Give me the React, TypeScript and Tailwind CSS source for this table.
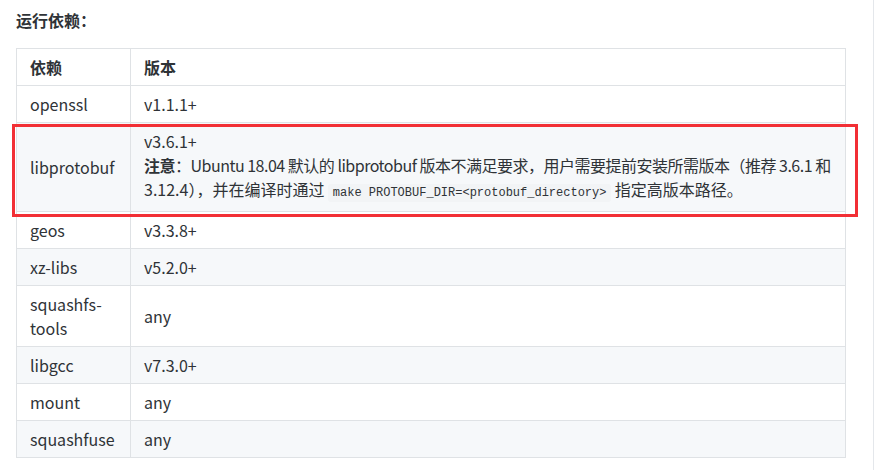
import React from "react";

const rows: { name: React.ReactNode; ver: React.ReactNode }[] = [
  { name: "openssl", ver: "v1.1.1+" },
  {
    name: "libprotobuf",
    ver: (
      <>
        <div>v3.6.1+</div>
        <div className="whitespace-nowrap tracking-[-0.5px]">
          <strong className="font-bold">注意</strong>：Ubuntu 18.04 默认的 libprotobuf 版本不满足要求，用户需要提前安装所需版本（推荐 3.6.1 和
        </div>
        <div className="whitespace-nowrap">
          3.12.4），并在编译时通过{" "}
          <code className="px-[0.4em] py-[0.2em] text-[12px] rounded-[3px] bg-[rgba(27,31,35,0.02)] font-['Liberation_Mono',monospace]">
            make PROTOBUF_DIR=&lt;protobuf_directory&gt;
          </code>{" "}
          指定高版本路径。
        </div>
      </>
    ),
  },
  { name: "geos", ver: "v3.3.8+" },
  { name: "xz-libs", ver: "v5.2.0+" },
  { name: (<>squashfs-<br />tools</>), ver: "any" },
  { name: "libgcc", ver: "v7.3.0+" },
  { name: "mount", ver: "any" },
  { name: "squashfuse", ver: "any" },
];

export default function App() {
  return (
    <div className="w-[874px] h-[470px] border-r border-[#e4e7eb] bg-white text-[#2f3337] text-[16px] leading-[24px] font-['Noto_Sans_CJK_SC',sans-serif] overflow-hidden">
      <div className="pl-4 pt-2 relative">
        <h4 className="font-bold text-[16px] leading-[24px] mb-4">运行依赖：</h4>
        <table className="w-[830px] table-fixed border-collapse">
          <colgroup>
            <col className="w-[114px]" />
            <col />
          </colgroup>
          <thead>
            <tr className="bg-white">
              <th className="text-left font-bold px-[13px] py-[6px] border border-[#dfe2e5]">依赖</th>
              <th className="text-left font-bold px-[13px] py-[6px] border border-[#dfe2e5]">版本</th>
            </tr>
          </thead>
          <tbody>
            {rows.map((r, i) => (
              <tr key={i} className={i % 2 === 0 ? "bg-white" : "bg-[#f6f8fa]"}>
                <td className="px-[13px] py-[6px] border border-[#dfe2e5] align-middle">{r.name}</td>
                <td className="px-[13px] py-[6px] border border-[#dfe2e5] align-middle">{r.ver}</td>
              </tr>
            ))}
          </tbody>
        </table>
        <div className="absolute left-[12px] top-[124px] w-[846px] h-[93px] border-[3px] border-[#f22f35] pointer-events-none" />
      </div>
    </div>
  );
}
